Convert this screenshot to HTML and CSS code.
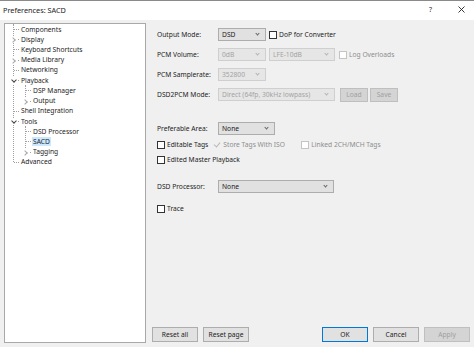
FILE: index.html
```html
<!DOCTYPE html>
<html>
<head>
<meta charset="utf-8">
<link rel="stylesheet" href="styles.css">
</head>
<body>
<div class="window">
  <div class="titlebar">
    <span class="title">Preferences: SACD</span>
    <span class="tb-help">?</span>
    <span class="tb-close"><svg width="7" height="7" viewBox="0 0 7 7"><path d="M0.5 0.5L6.5 6.5M6.5 0.5L0.5 6.5" stroke="#222" stroke-width="0.9" fill="none"/></svg></span>
  </div>
  <div class="client">
    <div class="tree">
      <ul class="tl tl0">
        <li><div class="row"><span class="lbl">Components</span></div></li>
        <li><div class="row"><i class="tog closed"></i><span class="lbl">Display</span></div></li>
        <li><div class="row"><span class="lbl">Keyboard Shortcuts</span></div></li>
        <li><div class="row"><i class="tog closed"></i><span class="lbl">Media Library</span></div></li>
        <li><div class="row"><span class="lbl">Networking</span></div></li>
        <li><div class="row"><i class="tog open"></i><span class="lbl">Playback</span></div>
          <ul class="tl tl1">
            <li><div class="row"><span class="lbl">DSP Manager</span></div></li>
            <li><div class="row"><i class="tog closed"></i><span class="lbl">Output</span></div></li>
          </ul>
        </li>
        <li><div class="row"><span class="lbl">Shell Integration</span></div></li>
        <li><div class="row"><i class="tog open"></i><span class="lbl">Tools</span></div>
          <ul class="tl tl1">
            <li><div class="row"><span class="lbl">DSD Processor</span></div></li>
            <li><div class="row"><span class="lbl sel">SACD</span></div></li>
            <li><div class="row"><i class="tog closed"></i><span class="lbl">Tagging</span></div></li>
          </ul>
        </li>
        <li><div class="row"><span class="lbl">Advanced</span></div></li>
      </ul>
    </div>
    <div class="page">
      <div class="form">
        <div class="frow r1">
          <span class="flabel">Output Mode:</span>
          <div class="combo w48"><span>DSD</span><i class="chev"></i></div>
          <label class="check ml3"><i class="box"></i><span>DoP for Converter</span></label>
        </div>
        <div class="frow r2">
          <span class="flabel">PCM Volume:</span>
          <div class="combo w48 dis"><span>0dB</span><i class="chev"></i></div>
          <div class="combo w66 dis ml3"><span>LFE-10dB</span><i class="chev"></i></div>
          <label class="check ml4 dis"><i class="box"></i><span>Log Overloads</span></label>
        </div>
        <div class="frow r3">
          <span class="flabel">PCM Samplerate:</span>
          <div class="combo w48 dis"><span>352800</span><i class="chev"></i></div>
        </div>
        <div class="frow r4">
          <span class="flabel">DSD2PCM Mode:</span>
          <div class="combo w117 dis"><span>Direct (64fp, 30kHz lowpass)</span><i class="chev"></i></div>
          <div class="btn sm dis ml5">Load</div>
          <div class="btn sm dis ml2">Save</div>
        </div>
        <div class="frow r5">
          <span class="flabel">Preferable Area:</span>
          <div class="combo w57"><span>None</span><i class="chev"></i></div>
        </div>
        <div class="frow r6">
          <label class="check"><i class="box"></i><span>Editable Tags</span></label>
          <label class="check dis tick-col"><i class="tick"></i><span>Store Tags With ISO</span></label>
          <label class="check dis linked"><i class="box"></i><span>Linked 2CH/MCH Tags</span></label>
        </div>
        <div class="frow r7">
          <label class="check"><i class="box"></i><span>Edited Master Playback</span></label>
        </div>
        <div class="frow r8">
          <span class="flabel">DSD Processor:</span>
          <div class="combo w116"><span>None</span><i class="chev"></i></div>
        </div>
        <div class="frow r9">
          <label class="check"><i class="box"></i><span>Trace</span></label>
        </div>
      </div>
      <div class="buttons">
        <div class="btn">Reset all</div>
        <div class="btn">Reset page</div>
        <div class="spacer"></div>
        <div class="btn default">OK</div>
        <div class="btn">Cancel</div>
        <div class="btn dis">Apply</div>
      </div>
    </div>
  </div>
</div>
</body>
</html>
```

FILE: styles.css
```css
* { box-sizing: border-box; }
html, body { margin: 0; padding: 0; }
body {
  width: 474px;
  height: 347px;
  overflow: hidden;
  background: #f0f0f0;
  font-family: "Noto Sans", "Open Sans", sans-serif;
  font-size: 6.7px;
  color: #1c1c1c;
}
.window {
  width: 474px;
  height: 347px;
  display: flex;
  flex-direction: column;
  background: #f0f0f0;
}
.titlebar {
  height: 20px;
  flex: none;
  background: #fff;
  border-top: 1px solid #8a8a8a;
  display: flex;
  align-items: center;
  padding-left: 3px;
  padding-bottom: 2px;
}
.title { font-size: 7.3px; flex: 1; }
.tb-help { font-size: 7px; color: #333; width: 8px; margin-right: 21px; }
.tb-close { width: 16px; display: flex; align-items: center; }
.client {
  flex: 1;
  display: flex;
  padding: 3px 0 4px 4px;
  min-height: 0;
}
.tree {
  width: 142px;
  flex: none;
  background: #fff;
  border: 1px solid #a9a9a9;
  padding-top: 0;
}
ul.tl { list-style: none; margin: 0; padding: 0; position: relative; }
ul.tl0::before {
  content: "";
  position: absolute;
  left: 8px;
  top: 0;
  bottom: 5px;
  border-left: 1px dotted #a0a0a0;
}
ul.tl1::before {
  content: "";
  position: absolute;
  left: 20px;
  top: 0;
  bottom: 5px;
  border-left: 1px dotted #a0a0a0;
}
.row {
  height: 10.23px;
  line-height: 10.23px;
  position: relative;
  display: flex;
  align-items: center;
  white-space: nowrap;
}
.tl0 > li > .row { padding-left: 15px; }
.tl1 > li > .row { padding-left: 27px; }
.tl0 > li > .row::before {
  content: "";
  position: absolute;
  left: 9px;
  width: 5px;
  top: 5px;
  border-top: 1px dotted #a0a0a0;
}
.tl1 > li > .row::before {
  content: "";
  position: absolute;
  left: 21px;
  width: 5px;
  top: 5px;
  border-top: 1px dotted #a0a0a0;
}
.lbl { padding: 0 1px; line-height: 9px; }
.lbl.sel { background: #cce8ff; }
.tog {
  position: absolute;
  top: 2px;
  width: 7px;
  height: 7px;
  background: #fff;
  z-index: 1;
}
.tl0 > li > .row > .tog { left: 5px; }
.tl1 > li > .row > .tog { left: 17px; }
.tog::after {
  content: "";
  position: absolute;
  width: 3px;
  height: 3px;
  border-right: 1px solid #a6a6a6;
  border-bottom: 1px solid #a6a6a6;
}
.tog.closed::after { left: 1px; top: 2px; transform: rotate(-45deg); }
.tog.open::after { left: 2px; top: 1px; transform: rotate(45deg); border-color: #404040; }

.page {
  flex: 1;
  display: flex;
  flex-direction: column;
  padding: 0 4px 1px 6px;
}
.form { padding-left: 5px; flex: 1; }
.frow {
  display: flex;
  align-items: center;
  height: 13px;
  white-space: nowrap;
}
.r1 { margin-top: 5px; }
.r2, .r3, .r4 { margin-top: 7px; }
.r5 { margin-top: 21px; }
.r6 { margin-top: 3px; }
.r7 { margin-top: 2px; }
.r8 { margin-top: 14px; }
.r9 { margin-top: 9px; }
.flabel { width: 61px; flex: none; }
.combo {
  height: 13px;
  background: #e1e1e1;
  border: 1px solid #adadad;
  position: relative;
  display: flex;
  align-items: center;
  padding-left: 3px;
  flex: none;
}
.combo.dis { background: #e6e6e6; border-color: #cfcfcf; color: #a3a3a3; }
.chev {
  position: absolute;
  right: 6px;
  top: 3px;
  width: 3px;
  height: 3px;
  border-right: 1px solid #666;
  border-bottom: 1px solid #666;
  transform: rotate(45deg);
}
.combo.dis .chev { border-color: #b4b4b4; }
.w48 { width: 48px; }
.w57 { width: 57px; }
.w66 { width: 66px; }
.w116 { width: 116px; }
.w117 { width: 117px; }
.ml2 { margin-left: 2px; }
.ml3 { margin-left: 3px; }
.ml4 { margin-left: 4px; }
.ml5 { margin-left: 5px; }
.check { display: flex; align-items: center; }
.box {
  width: 8px;
  height: 8px;
  border: 1px solid #333;
  background: #fff;
  margin-right: 2px;
  flex: none;
}
.check.dis { color: #8d8d8d; }
.check.dis .box { border-color: #c4c4c4; }
.tick-col { margin-left: 5px; width: 88px; }
.tick {
  width: 8px;
  height: 8px;
  margin-right: 2px;
  position: relative;
  flex: none;
}
.tick::after {
  content: "";
  position: absolute;
  left: 2px;
  top: 0px;
  width: 3px;
  height: 5px;
  border-right: 1px solid #b8b8b8;
  border-bottom: 1px solid #b8b8b8;
  transform: rotate(40deg);
}
.linked .box { margin-right: 2px; }
.btn {
  height: 15px;
  width: 46px;
  background: #e1e1e1;
  border: 1px solid #adadad;
  display: flex;
  align-items: center;
  justify-content: center;
  flex: none;
}
.btn.sm { width: 28px; height: 14px; }
.btn.dis { background: #d4d4d4; border-color: #bfbfbf; color: #a0a0a0; }
.btn.default { border-color: #0078d7; }
.buttons {
  display: flex;
  gap: 5px;
  height: 15px;
  flex: none;
}
.spacer { flex: 1; }
```
